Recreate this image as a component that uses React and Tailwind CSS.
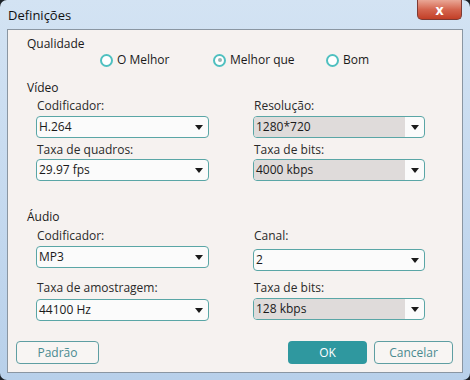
import React from 'react';

const font = { fontFamily: '"Open Sans", "Noto Sans", sans-serif' };

function Arrow() {
  return (
    <svg width="8" height="5" viewBox="0 0 8 5" className="shrink-0">
      <path d="M0 0 H8 L4 5 Z" fill="#1a1a1a" />
    </svg>
  );
}

function Select({ value, shaded }) {
  return (
    <div className="flex h-[22px] items-stretch rounded-[4px] border border-[#5aa6a6] bg-[#fbfbfb] overflow-hidden">
      <div className={`flex flex-1 items-center pl-[2px] text-[12px] text-[#1a1a1a] ${shaded ? 'bg-[#dfdbda] mr-[6px]' : ''}`}>
        {value}
      </div>
      <div className={`flex items-center pr-[5px] ${shaded ? '' : 'pl-2'}`}>
        <Arrow />
      </div>
    </div>
  );
}

function Field({ label, value, shaded, gap = 'mt-[2px]' }) {
  return (
    <div>
      <div className="h-[16px] pl-[1px] text-[12px] leading-[16px] text-[#2a2a2a]">{label}</div>
      <div className={gap}>
        <Select value={value} shaded={shaded} />
      </div>
    </div>
  );
}

function Radio({ label, checked }) {
  return (
    <div className="flex w-[113px] items-center gap-[4px]">
      <span className="flex h-[13px] w-[13px] items-center justify-center rounded-full border-2 border-[#4fc0c0] bg-white">
        {checked && <span className="h-[4px] w-[4px] rounded-full bg-[#9ab4b4]" />}
      </span>
      <span className="text-[12px] text-[#1a1a1a]">{label}</span>
    </div>
  );
}

export default function App() {
  return (
    <div className="h-[380px] w-[470px] bg-[#1c2228]" style={font}>
      <div className="flex h-full flex-col rounded-[7px] bg-gradient-to-b from-[#d3e3f3] via-[#c6daef] to-[#b8d0ea] px-[7px] pb-[7px]">
        <div className="flex h-[29px] shrink-0 items-start justify-between">
          <div className="pl-[1px] pt-[7px] text-[13px] leading-[16px] text-[#111]">Definições</div>
          <div className="mr-[1px] flex h-[20px] w-[45px] items-center justify-center rounded-b-[5px] border border-t-0 border-[#7d3a33] bg-gradient-to-b from-[#e9a796] via-[#d4654f] to-[#c23e26] text-[14px] font-bold leading-none text-white">
            x
          </div>
        </div>

        <div className="flex flex-1 flex-col border border-[#8a96a2] bg-[#f6f2f0] pb-[8px]">
          <div className="pl-[19px] pt-[6px] text-[12px] leading-[16px] text-[#1a1a1a]">Qualidade</div>
          <div className="flex h-[16px] pl-[92px]">
            <Radio label="O Melhor" />
            <Radio label="Melhor que" checked />
            <Radio label="Bom" />
          </div>

          <div className="mt-[12px] pl-[19px] text-[12px] leading-[16px] text-[#1a1a1a]">Vídeo</div>
          <div className="mt-[2px] grid grid-cols-[173px_172px] gap-x-[44px] gap-y-[4px] pl-[28px]">
            <Field label="Codificador:" value="H.264" />
            <Field label="Resolução:" value="1280*720" shaded />
            <Field label="Taxa de quadros:" value="29.97 fps" gap="mt-[1px]" />
            <Field label="Taxa de bits:" value="4000 kbps" shaded gap="mt-[1px]" />
          </div>

          <div className="mt-[28px] pl-[19px] text-[12px] leading-[16px] text-[#1a1a1a]">Áudio</div>
          <div className="mt-[3px] grid grid-cols-[173px_172px] gap-x-[44px] gap-y-[9px] pl-[28px]">
            <Field label="Codificador:" value="MP3" />
            <Field label="Canal:" value="2" gap="mt-[5px]" />
            <Field label="Taxa de amostragem:" value="44100 Hz" gap="mt-[3px]" />
            <Field label="Taxa de bits:" value="128 kbps" shaded gap="mt-[2px]" />
          </div>

          <div className="mt-auto flex items-center pl-[8px] pr-[9px]">
            <button className="h-[23px] w-[83px] rounded-[4px] border border-[#5e9ea2] bg-[#f8f5f3] text-[12px] text-[#4a8a90]">
              Padrão
            </button>
            <button className="ml-auto h-[23px] w-[79px] rounded-[4px] bg-[#2f989f] text-[12px] text-white">OK</button>
            <button className="ml-[7px] h-[23px] w-[79px] rounded-[4px] border border-[#5e9ea2] bg-[#f8f5f3] text-[12px] text-[#4a8a90]">
              Cancelar
            </button>
          </div>
        </div>
      </div>
    </div>
  );
}
